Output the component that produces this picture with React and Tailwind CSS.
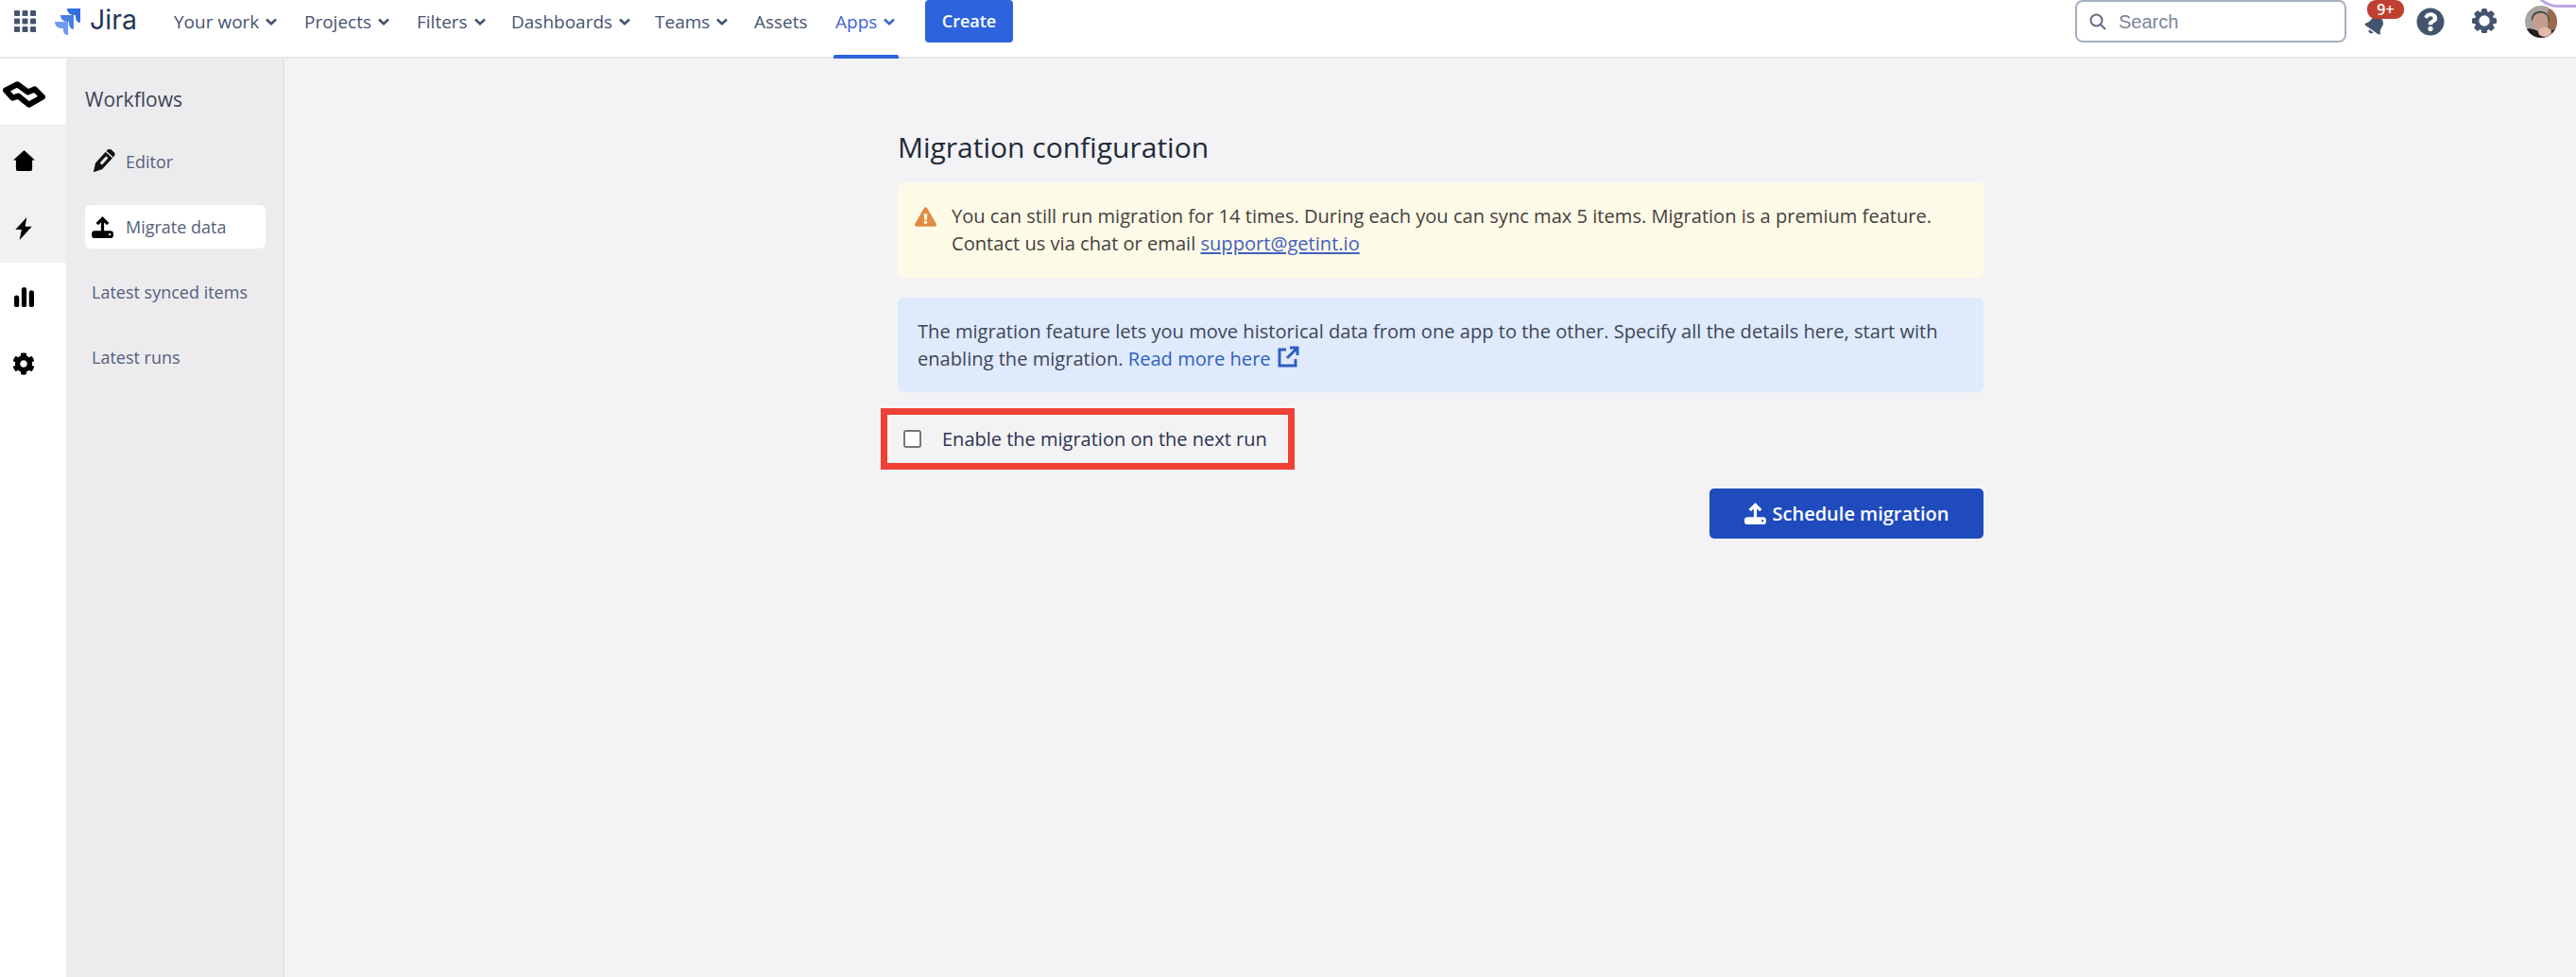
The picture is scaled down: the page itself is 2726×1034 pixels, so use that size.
import React from "react";
import { FaExclamationTriangle, FaQuestionCircle, FaBell, FaCog } from "react-icons/fa";

const sans = "font-['Open_Sans',sans-serif]";

function Upload({ className, dot }) {
  return (
    <svg viewBox="0 0 24 24" className={className} fill="none">
      <path d="M12 18 V2.5 M6 8.5 L12 2.5 L18 8.5" stroke="currentColor" strokeWidth="3.4" />
      <rect x="0" y="16" width="24" height="8" rx="3.5" fill="currentColor" />
      <circle cx="20" cy="20" r="1.2" fill={dot} />
    </svg>
  );
}

function Pencil({ className }) {
  return (
    <svg viewBox="0 0 24 24" className={className}>
      <g transform="rotate(42 12 12)">
        <path d="M7.5 1 Q7.5 -2 10 -2 H14 Q16.5 -2 16.5 1 V18 L12 26 L7.5 18 Z" fill="#111" />
        <rect x="7.5" y="2.2" width="9" height="1.2" fill="#ececef" />
        <rect x="10.6" y="6" width="2.8" height="9" fill="#ececef" />
      </g>
    </svg>
  );
}

function Chevron() {
  return (
    <svg viewBox="0 0 12 8" className="ml-[7px] h-[8px] w-[12px]" fill="none" stroke="currentColor" strokeWidth="2.6">
      <path d="M1 1.5 L6 6.2 L11 1.5" />
    </svg>
  );
}

function NavItem({ label, w, chevron = true, active }) {
  return (
    <div className={`relative flex h-[44px] items-center ${w} ${active ? "text-[#3f63d8]" : "text-[#44546f]"}`}>
      <span>{label}</span>
      {chevron && <Chevron />}
      {active && <div className="absolute left-[-2px] top-[57px] h-[4px] w-[69px] rounded-t-[2px] bg-[#2d64dd]" />}
    </div>
  );
}

function Rail({ bg = "", h, children }) {
  return <div className={`flex items-center justify-center pr-[20px] ${bg} ${h}`}>{children}</div>;
}

function SideItem({ label, icon, active }) {
  return (
    <div className={`flex h-[46px] w-[191px] items-center rounded-[6px] pl-[7px] text-[18px] text-[#55607c] ${active ? "bg-white" : ""}`}>
      {icon}
      <span>{label}</span>
    </div>
  );
}

function HeaderCog() {
  const teeth = [0, 45, 90, 135, 180, 225, 270, 315];
  return (
    <svg viewBox="0 0 26 26" className="ml-[29px] mt-[8px] h-[26px] w-[26px]" fill="#44546f">
      {teeth.map((a) => (
        <rect key={a} x="10" y="0" width="6" height="6" rx="1.5" transform={`rotate(${a} 13 13)`} />
      ))}
      <circle cx="13" cy="13" r="8" fill="none" stroke="#44546f" strokeWidth="4.6" />
    </svg>
  );
}

export default function App() {
  return (
    <div className={`flex h-[1034px] w-[2726px] flex-col overflow-hidden bg-[#f3f3f6] ${sans}`}>
      <header className="relative flex h-[62px] shrink-0 items-start border-b-2 border-[#e8e8ec] bg-white pt-[1px] text-[19px]">
        <svg viewBox="0 0 23 23" className="ml-[15px] mt-[10px] h-[23px] w-[23px]" fill="#44546f">
          {[0, 8.5, 17].flatMap((x) => [0, 8.5, 17].map((y) => <rect key={`${x}-${y}`} x={x} y={y} width="6" height="6" rx="1" />))}
        </svg>
        <svg viewBox="0 0 27 28" className="ml-[20px] mt-[8px] h-[28px] w-[27px]">
          <path d="M27 0 H13 V0 C13 4 16 7 20 7 H22 V9 C22 12 24 15 27 15 Z" fill="#2f6fe0" />
          <path d="M20 7 H6 C6 11 9 14 13 14 H15 V16 C15 19 17 22 20 22 Z" fill="#4a80e6" />
          <path d="M14 14 H0 C0 18 3 21 7 21 H9 V23 C9 26 11 28 14 28 Z" fill="#6c9cf0" />
        </svg>
        <span className="ml-[10px] mt-[-4px] w-[89px] font-['Inter',sans-serif] text-[28.5px] font-normal leading-[48px] text-[#253858]">Jira</span>
        <NavItem label="Your work" w="w-[138px]" />
        <NavItem label="Projects" w="w-[119px]" />
        <NavItem label="Filters" w="w-[100px]" />
        <NavItem label="Dashboards" w="w-[152px]" />
        <NavItem label="Teams" w="w-[105px]" />
        <NavItem label="Assets" w="w-[86px]" chevron={false} />
        <NavItem label="Apps" w="w-[95px]" active />
        <div className="mt-[-1px] flex h-[45px] w-[93px] items-center justify-center rounded-[4px] bg-[#2d64dd] text-[18px] font-semibold text-white">Create</div>
        <div className="ml-auto mt-[-1px] flex h-[45px] w-[287px] items-center rounded-[8px] border-2 border-[#a7b0c0] pl-[13px] font-['Liberation_Sans',sans-serif] text-[20px] text-[#7a869a]">
          <svg viewBox="0 0 18 18" className="mr-[13px] h-[18px] w-[18px]" fill="none" stroke="#5e6c84" strokeWidth="2">
            <circle cx="7.5" cy="7.5" r="6" />
            <path d="M12 12 L17 17" />
          </svg>
          Search
        </div>
        <div className="relative ml-[20px] mt-[14px] h-[20px] w-[28px] text-[#44546f]">
          <FaBell className="h-[22px] w-[22px] rotate-[35deg]" />
          <div className="absolute left-[2px] top-[-15px] flex h-[20px] w-[39px] items-center justify-center rounded-[9px] bg-[#bf4030] text-[16px] font-semibold leading-none text-white">9+</div>
        </div>
        <FaQuestionCircle className="ml-[26px] mt-[7px] h-[30px] w-[30px] text-[#44546f]" />
        <HeaderCog />
        <svg viewBox="0 0 34 34" className="ml-[30px] mr-[20px] mt-[5px] h-[34px] w-[34px]">
          <defs>
            <clipPath id="av"><circle cx="17" cy="17" r="17" /></clipPath>
          </defs>
          <g clipPath="url(#av)">
            <rect width="34" height="34" fill="#a9a5a0" />
            <rect x="24" y="4" width="10" height="22" fill="#9a6a50" />
            <path d="M7 17 C5 2 27 2 26 17 L24 12 C22 6 11 6 9 12 Z" fill="#3c3a3a" />
            <ellipse cx="16" cy="17" rx="7" ry="9" fill="#c79c8a" />
            <path d="M0 34 V26 C6 22 10 26 16 28 C22 30 28 24 34 26 V34 Z" fill="#221f20" />
            <ellipse cx="21" cy="28" rx="7" ry="5" fill="#e0b9a8" />
          </g>
        </svg>
        <div className="absolute right-[-28px] top-[-48px] h-[56px] w-[75px] rounded-full border-[3px] border-[#bba8e2]" />
      </header>

      <div className="flex min-h-0 flex-1">
        <aside className="flex w-[70px] shrink-0 flex-col bg-white">
          <Rail h="h-[71px] border-b border-[#e8e8ec]">
            <svg viewBox="0 0 44 28" className="ml-[1px] mt-[4px] h-[29px] w-[45px]" fill="none" stroke="#000" strokeWidth="6" strokeLinejoin="round">
              <path d="M15 4 L26 12 L33 9 L41 17 L27 25 L16 16 L10 18 L3 10 Z" />
            </svg>
          </Rail>
          <Rail bg="bg-[#f1f1f3]" h="h-[73px]">
            <svg viewBox="0 0 24 23" className="h-[22px] w-[23px]" fill="#000">
              <path d="M12 0 L24 11 H21 V21 Q21 23 19 23 H5 Q3 23 3 21 V11 H0 Z" />
            </svg>
          </Rail>
          <Rail bg="bg-[#f1f1f3]" h="h-[72px]">
            <svg viewBox="0 0 16 22" className="h-[24px] w-[18px]" fill="#000">
              <path d="M11 0 L0 12 H6 L4 22 L16 9 H9.5 Z" />
            </svg>
          </Rail>
          <Rail h="h-[73px]">
            <svg viewBox="0 0 20 20" className="h-[21px] w-[21px]" fill="#000">
              <rect x="0" y="8" width="5" height="12" rx="2.5" />
              <rect x="7.5" y="0" width="5" height="20" rx="2.5" />
              <rect x="15" y="3" width="5" height="17" rx="2.5" />
            </svg>
          </Rail>
          <Rail h="h-[68px]"><FaCog className="h-[24px] w-[24px] text-black" /></Rail>
        </aside>
        <nav className="flex w-[231px] shrink-0 flex-col border-r-2 border-[#e3e3e7] bg-[#ececef] pl-[20px] pt-[26px]">
          <h2 className="mb-[26px] text-[21px] font-normal leading-[34px] text-[#3c4455]">Workflows</h2>
          <div className="flex flex-col gap-[23px]">
            <SideItem label="Editor" icon={<Pencil className="ml-[-1px] mr-[11px] h-[26px] w-[26px]" />} />
            <SideItem label="Migrate data" active icon={<Upload dot="#fff" className="mr-[13px] h-[23px] w-[23px] text-black" />} />
            <SideItem label="Latest synced items" />
            <SideItem label="Latest runs" />
          </div>
        </nav>
        <main className="flex-1 pl-[649px] pt-[72px]">
          <div className="w-[1149px]">
            <h1 className="mb-[15px] text-[30px] font-normal leading-[44px] text-[#222a38]">Migration configuration</h1>
            <div className="flex h-[101px] rounded-[6px] bg-[#fefae8] pl-[18px] pt-[21px] text-[20.1px] leading-[29px] text-[#453f3c]">
              <FaExclamationTriangle className="mr-[16px] mt-[4px] h-[23px] w-[23px] shrink-0 text-[#e28b42]" />
              <div>
                You can still run migration for 14 times. During each you can sync max 5 items. Migration is a premium feature.
                <br />
                Contact us via chat or email <a className="text-[#3f5fc0] underline">support@getint.io</a>
              </div>
            </div>
            <div className="mt-[21px] h-[100px] rounded-[6px] bg-[#dfeafd] pl-[21px] pt-[21px] text-[20.1px] leading-[29px] text-[#3d4658]">
              The migration feature lets you move historical data from one app to the other. Specify all the details here, start with
              <br />
              enabling the migration. <a className="text-[#2f5fc4]">Read more here</a>
              <svg viewBox="0 0 24 24" className="ml-[6px] inline-block h-[24px] w-[24px] align-[-3px]" fill="none" stroke="#2f5fc4" strokeWidth="3">
                <path d="M10 4 H3 V21 H20 V14" />
                <path d="M11 13 L21 3 M14 2 H22 V10" />
              </svg>
            </div>
            <div className="ml-[-18px] mt-[17px] flex h-[65px] w-[438px] items-center border-[7px] border-[#ee4035] pl-[17px] text-[20px] text-[#2b3350]">
              <div className="mr-[22px] h-[19px] w-[19px] rounded-[3px] border-2 border-[#767676] bg-white" />
              Enable the migration on the next run
            </div>
            <div className="mt-[20px] flex justify-end">
              <button className="flex h-[53px] w-[290px] items-center justify-center rounded-[5px] bg-[#1f4bbd] text-[20px] font-semibold text-white">
                <Upload dot="#1f4bbd" className="mr-[7px] h-[23px] w-[23px]" />
                Schedule migration
              </button>
            </div>
          </div>
        </main>
      </div>
    </div>
  );
}
